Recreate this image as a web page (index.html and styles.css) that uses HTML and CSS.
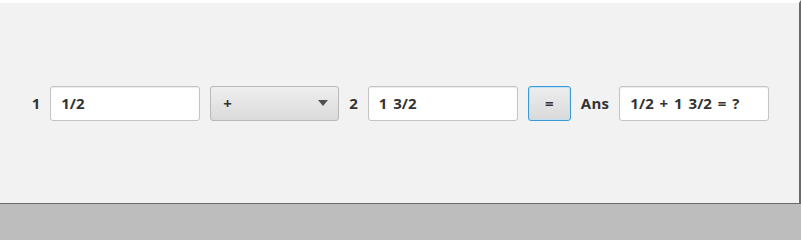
FILE: index.html
```html
<!DOCTYPE html>
<html>
<head>
<meta charset="utf-8">
<link rel="stylesheet" href="styles.css">
</head>
<body>
<div class="window">
  <div class="row">
    <span class="label">1</span>
    <div class="field">1/2</div>
    <div class="combo"><span>+</span><span class="arrow"></span></div>
    <span class="label">2</span>
    <div class="field">1 3/2</div>
    <div class="button">=</div>
    <span class="label ans">Ans</span>
    <div class="field">1/2 + 1 3/2 = ?</div>
  </div>
</div>
</body>
</html>
```
FILE: styles.css
```css
html, body {
  margin: 0;
  padding: 0;
  background: #bdbdbd;
  width: 801px;
  height: 206px;
  overflow: hidden;
}
.window {
  box-sizing: border-box;
  width: 801px;
  height: 204px;
  background: #f2f2f2;
  border-top: 3px solid #ffffff;
  border-right: 2px solid #6a6a6a;
  border-bottom: 1px solid #6a6a6a;
  padding-left: 2px;
  display: flex;
  align-items: center;
  justify-content: center;
  font-family: "Open Sans", "DejaVu Sans", sans-serif;
  font-weight: bold;
  font-size: 15px;
  color: #333333;
}
.row {
  display: flex;
  align-items: center;
  gap: 10px;
}
.label {
  line-height: 20px;
}
.ans {
  letter-spacing: 0.3px;
}
.field {
  box-sizing: border-box;
  width: 150px;
  height: 35px;
  background: #ffffff;
  border: 1px solid #c4c4c4;
  border-radius: 3px;
  padding: 0 10px;
  display: flex;
  align-items: center;
  word-spacing: 2px;
  box-shadow: inset 0 1px 1px #ececec;
}
.combo {
  box-sizing: border-box;
  width: 129px;
  height: 35px;
  border: 1px solid #b8b8b8;
  border-radius: 3px;
  background: linear-gradient(#efefef, #dadada);
  padding: 0 10px 0 12px;
  display: flex;
  align-items: center;
  justify-content: space-between;
}
.arrow {
  width: 0;
  height: 0;
  border-left: 5px solid transparent;
  border-right: 5px solid transparent;
  border-top: 6px solid #505050;
}
.button {
  box-sizing: border-box;
  width: 43px;
  height: 35px;
  border: 1px solid #3a9ad6;
  border-radius: 3px;
  box-shadow: inset 0 0 0 1px #bfe2f6;
  background: linear-gradient(#eeeeee, #d9d9d9);
  display: flex;
  align-items: center;
  justify-content: center;
}
```
